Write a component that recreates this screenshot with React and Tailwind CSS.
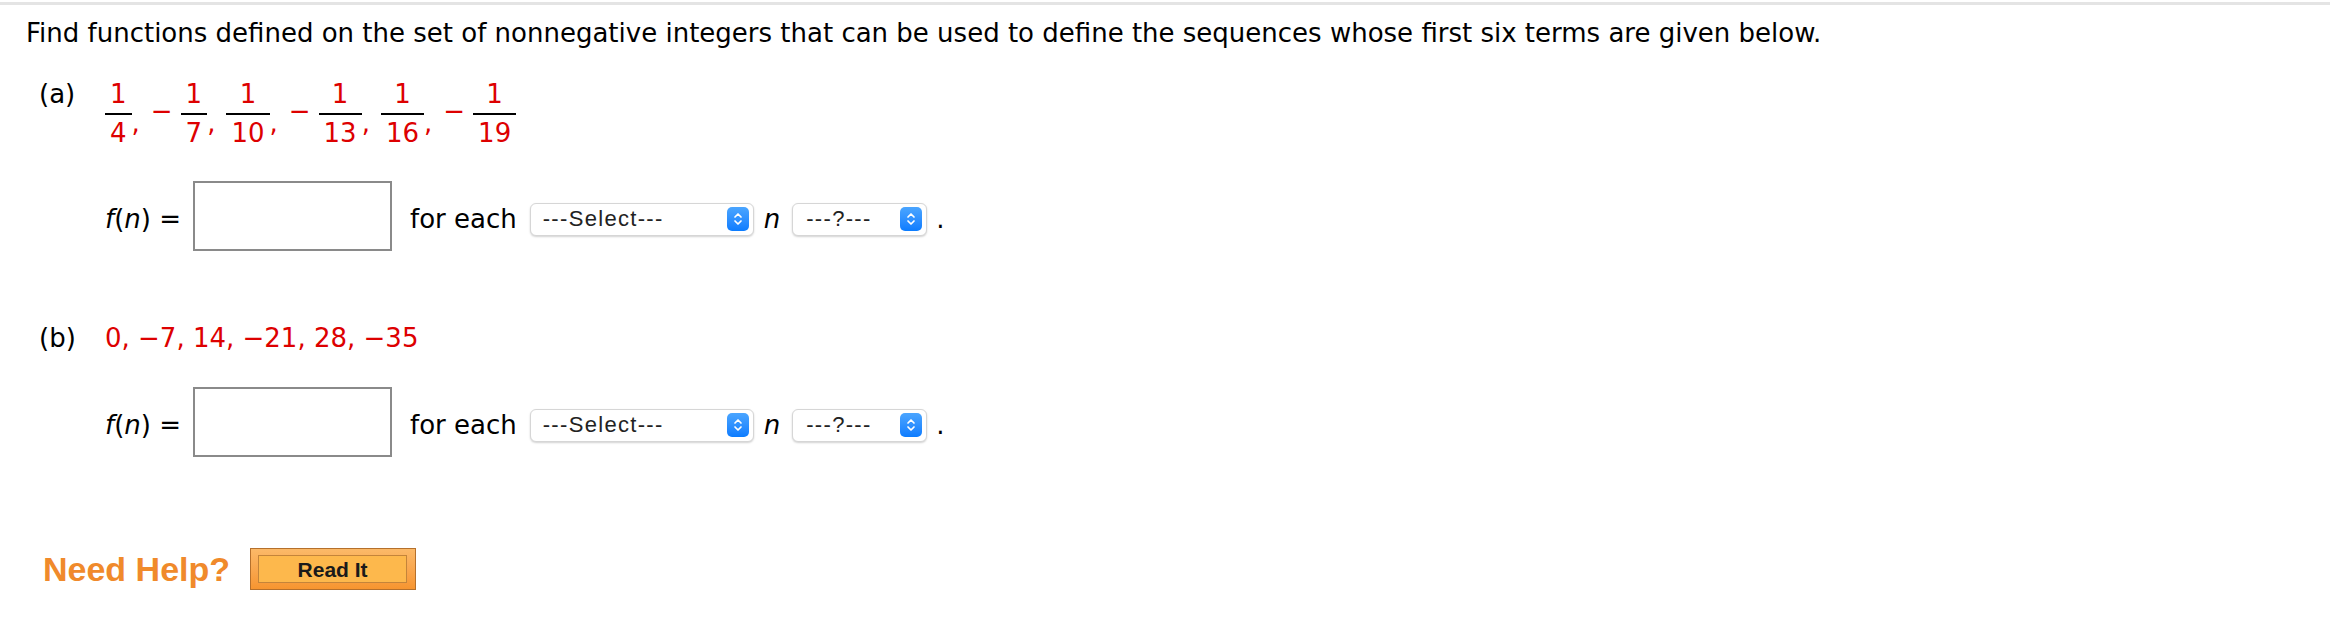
import React from 'react';

function Frac({ d }) {
    return (
        <span className="inline-flex flex-col items-center">
            <span className="px-[5px] leading-[26px]">1</span>
            <span className="mt-[6px] h-[2px] w-full bg-black" />
            <span className="mt-[5px] px-[5px] leading-[26px]">{d}</span>
        </span>
    );
}

function Comma() {
    return <span className="mt-[18px] mr-[11px] leading-[26px]">,</span>;
}

function Minus() {
    return <span className="mb-[6px] mr-[8px] leading-[26px]">−</span>;
}

function Stepper() {
    return (
        <span className="flex h-[24px] w-[22px] items-center justify-center rounded-[5px] bg-gradient-to-b from-[#4aa5ff] to-[#0a7cff]">
            <svg width="10" height="14" viewBox="0 0 10 14" fill="none">
                <path d="M2 5 L5 2 L8 5" stroke="white" strokeWidth="1.7" strokeLinecap="round" strokeLinejoin="round" />
                <path d="M2 9 L5 12 L8 9" stroke="white" strokeWidth="1.7" strokeLinecap="round" strokeLinejoin="round" />
            </svg>
        </span>
    );
}

function Select({ width, label, textPad }) {
    return (
        <span
            className={`flex h-[33px] items-center justify-between rounded-[6px] border border-[#d6d6d6] bg-white pr-[4px] shadow-[0_1px_2px_rgba(0,0,0,0.18)] ${width} ${textPad}`}
        >
            <span className="font-['Liberation_Sans',sans-serif] text-[22px] leading-none tracking-[0.06em] text-[#222222]">
                {label}
            </span>
            <Stepper />
        </span>
    );
}

function AnswerRow() {
    return (
        <div className="flex items-center">
            <span className="whitespace-pre">
                <i>f</i>(<i>n</i>) =
            </span>
            <span className="ml-[12px] mb-[6px] h-[70px] w-[199px] border-2 border-[#8a8a8a] bg-white" />
            <span className="ml-[18px]">for each</span>
            <span className="ml-[13px]">
                <Select width="w-[224px]" label="---Select---" textPad="pl-[12px]" />
            </span>
            <span className="ml-[10px]">
                <i>n</i>
            </span>
            <span className="ml-[12px]">
                <Select width="w-[135px]" label="---?---" textPad="pl-[13px]" />
            </span>
            <span className="ml-[9px]">.</span>
        </div>
    );
}

export default function App() {
    return (
        <div className="min-h-screen bg-white font-['DejaVu_Sans',sans-serif] text-[26px] leading-[26px] text-black">
            <div className="pt-[2px]">
                <div className="h-[3px] bg-[#e4e4e4]" />
            </div>

            <div className="pl-[26px] pt-[15px]">
                <p>
                    Find functions defined on the set of nonnegative integers that can be used to define the
                    sequences whose first six terms are given below.
                </p>

                {/* part (a) */}
                <div className="mt-[35px] flex items-start">
                    <span className="w-[79px] pl-[13px]">(a)</span>
                    <div>
                        <div className="flex items-center text-[#dd0000]">
                            <Frac d="4" />
                            <Comma />
                            <Minus />
                            <Frac d="7" />
                            <Comma />
                            <Frac d="10" />
                            <Comma />
                            <Minus />
                            <Frac d="13" />
                            <Comma />
                            <Frac d="16" />
                            <Comma />
                            <Minus />
                            <Frac d="19" />
                        </div>
                        <div className="mt-[35px]">
                            <AnswerRow />
                        </div>
                    </div>
                </div>

                {/* part (b) */}
                <div className="mt-[68px] flex items-start">
                    <span className="w-[79px] pl-[13px]">(b)</span>
                    <div>
                        <p className="text-[#dd0000]">0, −7, 14, −21, 28, −35</p>
                        <div className="mt-[36px]">
                            <AnswerRow />
                        </div>
                    </div>
                </div>

                {/* help */}
                <div className="mt-[85px] flex items-center pl-[17px]">
                    <span className="font-['Liberation_Sans',sans-serif] text-[34px] font-bold leading-[34px] text-[#f08a2b]">
                        Need Help?
                    </span>
                    <span className="ml-[20px] flex h-[42px] w-[166px] border border-[#b5702c] bg-gradient-to-b from-[#fbb968] to-[#f7952f] pt-[6px] pb-[6px] pl-[7px] pr-[8px]">
                        <span className="flex flex-1 items-center justify-center border border-[#c4843a] bg-[#fdb84c] font-['Liberation_Sans',sans-serif] text-[21px] font-bold leading-none text-[#1a1a1a]">
                            Read It
                        </span>
                    </span>
                </div>
            </div>
        </div>
    );
}
